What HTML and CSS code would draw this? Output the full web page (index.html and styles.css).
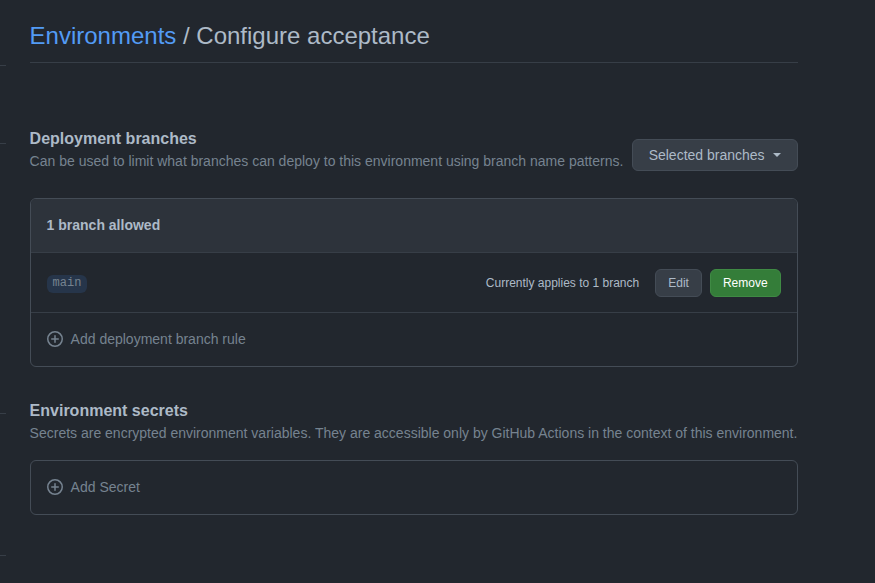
FILE: index.html
```html
<!DOCTYPE html>
<html lang="en">
<head>
<meta charset="utf-8">
<title>Configure acceptance</title>
<link rel="stylesheet" href="styles.css">
</head>
<body>
<i class="stub stub-1"></i><i class="stub stub-2"></i><i class="stub stub-3"></i><i class="stub stub-4"></i>
<main class="page">
  <h1 class="title"><a class="crumb" href="#">Environments</a> / Configure acceptance</h1>

  <section class="branches">
    <div class="section-head">
      <div>
        <h2 class="section-title">Deployment branches</h2>
        <p class="section-desc">Can be used to limit what branches can deploy to this environment using branch name patterns.</p>
      </div>
      <button class="btn btn-select" type="button">Selected branches<span class="caret"></span></button>
    </div>
    <div class="box">
      <div class="box-header">1 branch allowed</div>
      <div class="box-row">
        <code class="branch">main</code>
        <div class="row-actions">
          <span class="applies">Currently applies to 1 branch</span>
          <button class="btn btn-sm" type="button">Edit</button>
          <button class="btn btn-sm btn-green" type="button">Remove</button>
        </div>
      </div>
      <div class="add-row">
        <svg class="plus" viewBox="0 0 16 16" width="16" height="16"><path fill-rule="evenodd" d="M1.5 8a6.5 6.5 0 1113 0 6.5 6.5 0 01-13 0zM8 0a8 8 0 100 16A8 8 0 008 0zm.75 4.75a.75.75 0 00-1.5 0v2.5h-2.5a.75.75 0 000 1.5h2.5v2.5a.75.75 0 001.5 0v-2.5h2.5a.75.75 0 000-1.5h-2.5v-2.5z"/></svg>
        <span>Add deployment branch rule</span>
      </div>
    </div>
  </section>

  <section class="secrets">
    <h2 class="section-title">Environment secrets</h2>
    <p class="section-desc">Secrets are encrypted environment variables. They are accessible only by GitHub Actions in the context of this environment.</p>
    <div class="box box-secrets">
      <div class="add-row">
        <svg class="plus" viewBox="0 0 16 16" width="16" height="16"><path fill-rule="evenodd" d="M1.5 8a6.5 6.5 0 1113 0 6.5 6.5 0 01-13 0zM8 0a8 8 0 100 16A8 8 0 008 0zm.75 4.75a.75.75 0 00-1.5 0v2.5h-2.5a.75.75 0 000 1.5h2.5v2.5a.75.75 0 001.5 0v-2.5h2.5a.75.75 0 000-1.5h-2.5v-2.5z"/></svg>
        <span>Add Secret</span>
      </div>
    </div>
  </section>
</main>
</body>
</html>
```
FILE: styles.css
```css
* { box-sizing: border-box; }
html, body { height: 100%; }
body {
  margin: 0;
  background: #22272e;
  color: #adbac7;
  font-family: "Liberation Sans", Arial, sans-serif;
  font-size: 14px;
  overflow: hidden;
}
.stub { position: absolute; left: 0; width: 6px; height: 1px; background: #373e47; }
.stub-1 { top: 65px; }
.stub-2 { top: 143px; }
.stub-3 { top: 413px; }
.stub-4 { top: 555px; }
.page { width: 768px; margin-left: 29.6px; }
.title {
  margin: 0;
  height: 63px;
  padding-top: 21px;
  font-size: 24px;
  line-height: 30px;
  font-weight: 400;
  border-bottom: 1px solid #373e47;
}
.crumb { color: #539bf5; text-decoration: none; }
.branches { margin-top: 66px; }
.section-head { display: flex; justify-content: space-between; align-items: flex-end; }
.section-title { margin: 0; font-size: 16px; line-height: 20px; font-weight: 600; color: #adbac7; }
.section-desc { margin: 2px 0 0; font-size: 14px; line-height: 21px; color: #768390; white-space: nowrap; }
.btn {
  font-family: inherit;
  border: 1px solid #444c56;
  border-radius: 6px;
  background: #373e47;
  color: #adbac7;
  cursor: pointer;
}
.btn-select {
  display: flex;
  align-items: center;
  height: 32px;
  margin-bottom: 1px;
  padding: 0 16px;
  font-size: 14px;
  white-space: nowrap;
}
.caret {
  margin-left: 8px;
  border: 4px solid transparent;
  border-top-color: #adbac7;
  border-bottom-width: 0;
}
.box { margin-top: 26px; border: 1px solid #444c56; border-radius: 6px; }
.box-header {
  height: 54px;
  padding: 0 0 2px 16px;
  display: flex;
  align-items: center;
  background: #2d333b;
  border-radius: 5px 5px 0 0;
  border-bottom: 1px solid #373e47;
  font-weight: 600;
}
.box-row {
  height: 60px;
  padding: 0 16px;
  display: flex;
  align-items: center;
  justify-content: space-between;
  border-bottom: 1px solid #373e47;
}
.branch {
  margin-top: 2px;
  padding: 0 6px;
  height: 18px;
  line-height: 17px;
  background: #26354a;
  border-radius: 6px;
  font-family: "Liberation Mono", monospace;
  font-size: 12px;
  color: #768390;
}
.row-actions { display: flex; align-items: center; }
.applies { font-size: 12px; margin-right: 16px; }
.btn-sm { height: 28px; padding: 0 12px; font-size: 12px; margin-left: 8px; }
.applies + .btn-sm { margin-left: 0; }
.btn-green { background: #347d39; color: #fff; border-color: #3f8a44; }
.add-row {
  height: 53px;
  padding: 0 0 2px 16px;
  display: flex;
  align-items: center;
  gap: 8px;
  color: #768390;
}
.plus { fill: #768390; }
.secrets { margin-top: 34px; }
.box-secrets { margin-top: 16px; height: 55px; }
```
